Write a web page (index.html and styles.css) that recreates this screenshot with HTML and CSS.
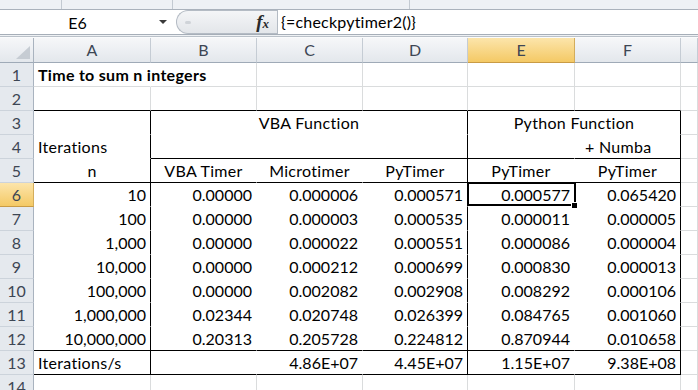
FILE: index.html
```html
<!DOCTYPE html>
<html lang="en">
<head>
    <meta charset="UTF-8">
    <meta name="viewport" content="width=device-width, initial-scale=1.0">
    <title>Time to sum n integers</title>
    <link rel="stylesheet" href="styles.css">
</head>
<body>
    <!-- bottom edge of the ribbon -->
    <div class="ribbon-edge">
        <span class="seg seg-1"></span>
        <span class="seg seg-2"></span>
        <span class="seg seg-3"></span>
    </div>

    <!-- Name box and formula bar -->
    <div class="formula-bar">
        <div class="name-box">
            <span class="ref">E6</span>
            <span class="arrow"></span>
        </div>
        <div class="fx-area">
            <span class="grip"></span>
            <span class="fx"><i>f</i><i class="fx-x">x</i></span>
        </div>
        <div class="formula">{=checkpytimer2()}</div>
    </div>
    <div class="bar-sep"></div>

    <!-- Sheet -->
    <div class="sheet">
        <div class="row hrow">
            <div class="ch corner">
                <svg width="14" height="13" viewBox="0 0 14 13"><path d="M14 0 L14 13 L0 13 Z" fill="#c6ccd3"/></svg>
            </div>
            <div class="ch">A</div>
            <div class="ch">B</div>
            <div class="ch">C</div>
            <div class="ch">D</div>
            <div class="ch sel-h">E</div>
            <div class="ch">F</div>
            <div class="ch"></div>
        </div>

        <div class="row">
            <div class="rh">1</div>
            <div class="cell bold no-rb">Time to sum n integers</div>
            <div class="cell"></div>
            <div class="cell"></div>
            <div class="cell"></div>
            <div class="cell"></div>
            <div class="cell"></div>
            <div class="cell"></div>
        </div>

        <div class="row">
            <div class="rh">2</div>
            <div class="cell bb"></div>
            <div class="cell bb"></div>
            <div class="cell bb"></div>
            <div class="cell bb"></div>
            <div class="cell bb"></div>
            <div class="cell bb"></div>
            <div class="cell"></div>
        </div>

        <div class="row">
            <div class="rh">3</div>
            <div class="cell t br"></div>
            <div class="cell t br center span-3">VBA Function</div>
            <div class="cell t br center span-2">Python Function</div>
            <div class="cell"></div>
        </div>

        <div class="row">
            <div class="rh">4</div>
            <div class="cell t br">Iterations</div>
            <div class="cell t br bb span-3"></div>
            <div class="cell t bb"></div>
            <div class="cell t br bb indent">+ Numba</div>
            <div class="cell"></div>
        </div>

        <div class="row">
            <div class="rh">5</div>
            <div class="cell t br bb center">n</div>
            <div class="cell t bb center">VBA Timer</div>
            <div class="cell t bb center">Microtimer</div>
            <div class="cell t br bb center">PyTimer</div>
            <div class="cell t bb center">PyTimer</div>
            <div class="cell t br bb center">PyTimer</div>
            <div class="cell"></div>
        </div>

        <div class="row">
            <div class="rh sel-h">6</div>
            <div class="cell t br num">10</div>
            <div class="cell t num">0.00000</div>
            <div class="cell t num">0.000006</div>
            <div class="cell t br num">0.000571</div>
            <div class="cell t num sel">0.000577</div>
            <div class="cell t br num">0.065420</div>
            <div class="cell"></div>
        </div>

        <div class="row">
            <div class="rh">7</div>
            <div class="cell t br num">100</div>
            <div class="cell t num">0.00000</div>
            <div class="cell t num">0.000003</div>
            <div class="cell t br num">0.000535</div>
            <div class="cell t num">0.000011</div>
            <div class="cell t br num">0.000005</div>
            <div class="cell"></div>
        </div>

        <div class="row">
            <div class="rh">8</div>
            <div class="cell t br num">1,000</div>
            <div class="cell t num">0.00000</div>
            <div class="cell t num">0.000022</div>
            <div class="cell t br num">0.000551</div>
            <div class="cell t num">0.000086</div>
            <div class="cell t br num">0.000004</div>
            <div class="cell"></div>
        </div>

        <div class="row">
            <div class="rh">9</div>
            <div class="cell t br num">10,000</div>
            <div class="cell t num">0.00000</div>
            <div class="cell t num">0.000212</div>
            <div class="cell t br num">0.000699</div>
            <div class="cell t num">0.000830</div>
            <div class="cell t br num">0.000013</div>
            <div class="cell"></div>
        </div>

        <div class="row">
            <div class="rh">10</div>
            <div class="cell t br num">100,000</div>
            <div class="cell t num">0.00000</div>
            <div class="cell t num">0.002082</div>
            <div class="cell t br num">0.002908</div>
            <div class="cell t num">0.008292</div>
            <div class="cell t br num">0.000106</div>
            <div class="cell"></div>
        </div>

        <div class="row">
            <div class="rh">11</div>
            <div class="cell t br num">1,000,000</div>
            <div class="cell t num">0.02344</div>
            <div class="cell t num">0.020748</div>
            <div class="cell t br num">0.026399</div>
            <div class="cell t num">0.084765</div>
            <div class="cell t br num">0.001060</div>
            <div class="cell"></div>
        </div>

        <div class="row">
            <div class="rh">12</div>
            <div class="cell t br bb num">10,000,000</div>
            <div class="cell t bb num">0.20313</div>
            <div class="cell t bb num">0.205728</div>
            <div class="cell t br bb num">0.224812</div>
            <div class="cell t bb num">0.870944</div>
            <div class="cell t br bb num">0.010658</div>
            <div class="cell"></div>
        </div>

        <div class="row">
            <div class="rh">13</div>
            <div class="cell t br bb">Iterations/s</div>
            <div class="cell t bb"></div>
            <div class="cell t bb num">4.86E+07</div>
            <div class="cell t br bb num">4.45E+07</div>
            <div class="cell t bb num">1.15E+07</div>
            <div class="cell t br bb num">9.38E+08</div>
            <div class="cell"></div>
        </div>

        <div class="row">
            <div class="rh">14</div>
            <div class="cell"></div>
            <div class="cell"></div>
            <div class="cell"></div>
            <div class="cell"></div>
            <div class="cell"></div>
            <div class="cell"></div>
            <div class="cell"></div>
        </div>
    </div>
</body>
</html>
```

FILE: styles.css
```css
body {
    margin: 0;
    width: 698px;
    height: 390px;
    overflow: hidden;
    background: #fff;
    font-family: Lato, "Liberation Sans", sans-serif;
    font-size: 16px;
    color: #000;
}

/* ribbon edge */
.ribbon-edge {
    display: flex;
    height: 9px;
    background: #eef1f5;
    border-bottom: 1px solid #aab2bc;
}
.seg {
    border-right: 1px solid #c3cad2;
}
.seg-1 { width: 61px; }
.seg-2 { width: 110px; }
.seg-3 { width: 236px; }

/* formula bar */
.formula-bar {
    display: flex;
    height: 24px;
}
.name-box {
    width: 176px;
    display: flex;
    align-items: center;
    background: #fff;
}
.name-box .ref {
    width: 155px;
    text-align: center;
}
.name-box .arrow {
    margin-left: 4px;
    width: 0;
    height: 0;
    border-left: 4px solid transparent;
    border-right: 4px solid transparent;
    border-top: 4px solid #3a3a3a;
}
.fx-area {
    box-sizing: border-box;
    width: 101px;
    display: flex;
    align-items: center;
    border: 1px solid #b4bbc4;
    border-right: none;
    border-radius: 12px 0 0 12px;
    background: linear-gradient(#f4f5f7, #e3e6ea);
}
.grip {
    margin-left: 8px;
    width: 6px;
    height: 3px;
    border-radius: 2px;
    background: #cfd3d8;
}
.fx {
    margin-left: auto;
    margin-right: 8px;
    font-family: "Liberation Serif", serif;
    font-size: 19px;
    font-weight: 700;
    color: #2a2a2a;
}
.fx-x {
    font-size: 13px;
}
.formula {
    flex: 1;
    background: #fff;
    border-left: 1px solid #b4bbc4;
    padding-left: 3px;
    line-height: 24px;
    letter-spacing: 0.2px;
}
.bar-sep {
    height: 1px;
    background: #eef1f4;
    border-top: 1px solid #a6aeb8;
    border-bottom: 1px solid #bac1c9;
}

/* sheet grid */
.row {
    display: grid;
    grid-template-columns: 34px 117px 106px 106px 105px 107px 106px 1fr;
    height: 24px;
}
.hrow {
    height: 26px;
    border-top: 1px solid #fafbfc;
    box-sizing: border-box;
}
.ch {
    box-sizing: border-box;
    background: linear-gradient(#f6f7f9, #e3e7ec);
    border-right: 1px solid #c5ccd4;
    border-bottom: 1px solid #9faab7;
    text-align: center;
    line-height: 24px;
    color: #3d4654;
}
.corner {
    display: flex;
    justify-content: flex-end;
    align-items: flex-end;
    padding: 0 3px 3px 0;
    border-right-color: #a9b3bf;
}
.rh {
    box-sizing: border-box;
    background: #e5e9ee;
    border-right: 1px solid #a9b3bf;
    border-bottom: 1px solid #ccd3db;
    text-align: center;
    line-height: 23px;
    color: #3d4654;
}
.sel-h {
    background: linear-gradient(#fce5ab, #f4c965);
    border-right-color: #d3ad5c;
    border-bottom-color: #c99b45;
}

.cell {
    box-sizing: border-box;
    border-right: 1px solid #dadcdd;
    border-bottom: 1px solid #dadcdd;
    padding: 0 4px;
    line-height: 23px;
    white-space: nowrap;
    letter-spacing: 0.3px;
}
.bold { font-weight: 700; }
.no-rb { border-right-color: transparent; }
.center { text-align: center; }
.num {
    text-align: right;
    letter-spacing: 0;
}
.indent { padding-left: 10px; }
.span-3 { grid-column: span 3; }
.span-2 { grid-column: span 2; }

/* table area: white fill hides gridlines */
.t {
    background: #fff;
    border-right-color: #fff;
    border-bottom-color: #fff;
}
.cell.br { border-right-color: #000; }
.cell.bb { border-bottom-color: #000; }

/* active cell */
.sel {
    position: relative;
    z-index: 1;
}
.sel::after {
    content: "";
    position: absolute;
    top: -1px;
    left: -1px;
    right: -2px;
    bottom: 0;
    border: 2px solid #000;
}
.sel::before {
    content: "";
    position: absolute;
    right: -4px;
    bottom: -3px;
    width: 5px;
    height: 5px;
    background: #000;
    border: 1px solid #fff;
    z-index: 2;
}
```
